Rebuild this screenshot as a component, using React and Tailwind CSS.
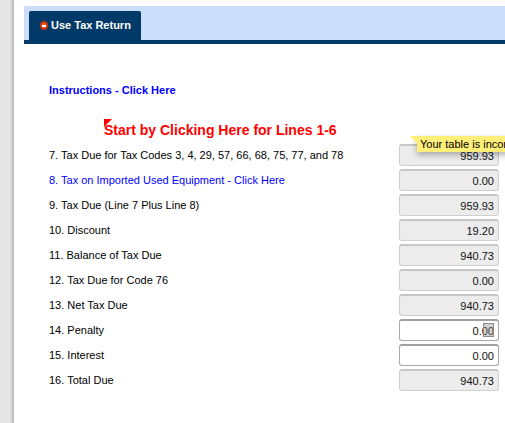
const rows = [
  { label: "7. Tax Due for Tax Codes 3, 4, 29, 57, 66, 68, 75, 77, and 78", value: "959.93" },
  { label: "8. Tax on Imported Used Equipment - Click Here", value: "0.00", link: true },
  { label: "9. Tax Due (Line 7 Plus Line 8)", value: "959.93" },
  { label: "10. Discount", value: "19.20" },
  { label: "11. Balance of Tax Due", value: "940.73" },
  { label: "12. Tax Due for Code 76", value: "0.00" },
  { label: "13. Net Tax Due", value: "940.73" },
  { label: "14. Penalty", value: "0.00", editable: true, focus: true },
  { label: "15. Interest", value: "0.00", editable: true },
  { label: "16. Total Due", value: "940.73" },
];

const Row = ({ label, value, link, editable, focus }) => {
  return (
    <div className="flex items-center justify-between h-[25px] pr-[6px]">
      <span className={link ? "text-[#0000ff]" : "text-black"}>{label}</span>
      <div
        className={`relative w-[100px] h-[22px] rounded-[3px] border border-t-2 text-right pr-[4px] leading-[20px] text-[#111] ${
          editable
            ? "bg-white border-[#a8a8a8] border-t-[#a0a0a0]"
            : "bg-[#ececec] border-[#cfcfcf] border-t-[#c6c6c6]"
        }`}
      >
        {value}
        {focus && (
          <span className="absolute right-[4px] top-[2px] w-[11px] h-[14px] border border-[#8c8c8c] bg-[#8a8a8a]/40" />
        )}
      </div>
    </div>
  );
};

const App = () => {
  return (
    <div className="flex w-[505px] h-[423px] overflow-hidden bg-white font-['Liberation_Sans',Arial,sans-serif] text-[11px]">
      <div className="w-[14px] shrink-0 bg-gradient-to-r from-[#e6e6e6] from-70% to-[#b4b4b4]" />
      <div className="flex-1 min-w-0 pl-[10px] pt-[6px]">
        <div className="flex h-[34px] items-end bg-[#ccdcfb] pl-[5px]">
          <div className="flex items-center gap-[3px] h-[29px] pl-[11px] pr-[10px] rounded-t-[2px] bg-[#013a68] font-bold text-white">
            <span className="relative w-[8px] h-[9px] rounded-full bg-[radial-gradient(circle,#f08040_0%,#c8380f_55%,#7a1a08_100%)]">
              <span className="absolute left-[2px] top-[4px] w-[4px] h-[2px] bg-white" />
            </span>
            Use Tax Return
          </div>
        </div>
        <div className="h-[4px] bg-[#013a68]" />
        <div className="pl-[25px]">
          <div className="mt-[38px] font-bold text-[#0000ff]">Instructions - Click Here</div>
          <div className="relative mt-[19px] ml-[55px] h-[24px] text-[14px] leading-[24px] font-bold text-[#ff0000]">
            <span className="absolute left-0 top-[1px] w-0 h-0 border-t-[8px] border-t-[#ff0000] border-r-[8px] border-r-transparent" />
            Start by Clicking Here for Lines 1-6
          </div>
          <div className="relative mt-[1px]">
            {rows.map((row) => (
              <Row key={row.label} {...row} />
            ))}
            <div className="absolute left-[368px] -top-[7px] h-[16px] pl-[3px] pr-[20px] whitespace-nowrap bg-[#ffee77] text-black leading-[16px] shadow-[0_3px_6px_rgba(0,0,0,0.3)]">
              <span className="absolute -left-[7px] top-0 w-0 h-0 border-t-[7px] border-t-[#ffee77] border-l-[7px] border-l-transparent" />
              Your table is incomplete
            </div>
          </div>
        </div>
      </div>
    </div>
  );
};

export default App;
